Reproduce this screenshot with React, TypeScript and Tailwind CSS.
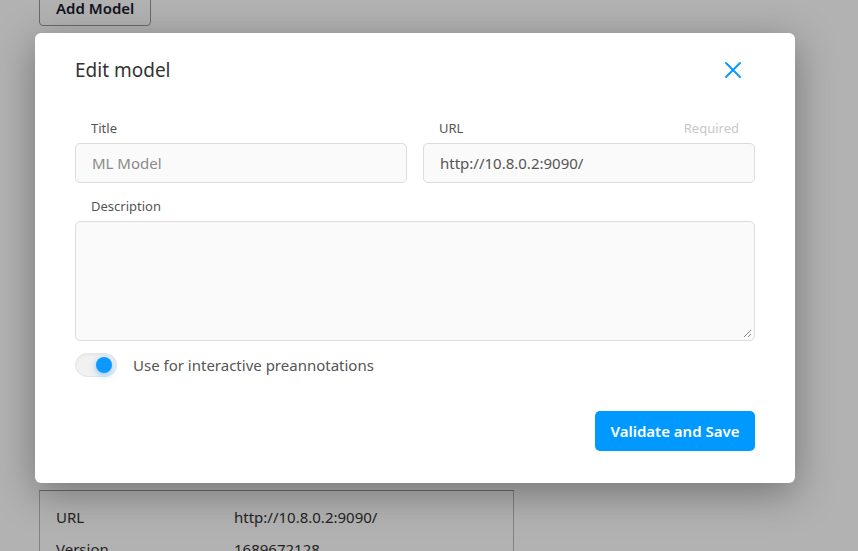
import React from "react";

const font = { fontFamily: '"Noto Sans", "Open Sans", sans-serif' };

const Field = ({
  label,
  value,
  muted,
  required,
}: {
  label: string;
  value: string;
  muted?: boolean;
  required?: boolean;
}) => {
  return (
    <div className="flex-1">
      <div className="flex justify-between h-[18px] px-4 text-[13px] leading-[18px]">
        <span className="text-[#555]">{label}</span>
        {required && <span className="text-[#c8c8c8]">Required</span>}
      </div>
      <div
        className={`mt-[6px] h-10 rounded-[5px] border border-[#dcdcdc] bg-[#fafafa] px-4 flex items-center text-[15px] ${
          muted ? "text-[#8a8a8a]" : "text-[#555]"
        }`}
      >
        {value}
      </div>
    </div>
  );
};

export default function App() {
  return (
    <div className="relative h-[551px] w-[858px] overflow-hidden bg-white" style={font}>
      {/* page behind the dialog */}
      <div className="flex flex-col items-start pl-[39px]">
        <button className="-mt-[10px] h-9 px-4 rounded-[4px] border border-[#999] bg-white text-[15px] font-semibold text-[#1a1a2e]">
          Add Model
        </button>
        <div className="mt-[464px] w-[475px] border border-[#bbb] border-t-[#999] pt-[10px] px-4">
          <div className="flex items-center h-8 text-[15px] text-[#333]">
            <span className="w-[178px]">URL</span>
            <span>http://10.8.0.2:9090/</span>
          </div>
          <div className="flex items-center h-8 text-[15px] text-[#333]">
            <span className="w-[178px]">Version</span>
            <span>1689672128</span>
          </div>
        </div>
      </div>

      {/* overlay + dialog */}
      <div className="absolute inset-0 bg-black/30">
        <div className="ml-[35px] mt-[33px] w-[760px] h-[450px] rounded-[6px] bg-white shadow-[0_10px_40px_rgba(0,0,0,0.35)] px-10 pt-[22px]">
          <div className="flex items-center justify-between h-[30px]">
            <h2 className="text-[19px] text-[#333]">Edit model</h2>
            <svg width="18" height="18" viewBox="0 0 18 18" className="mr-[13px]">
              <path d="M2 2 L16 16 M16 2 L2 16" stroke="#0d99ff" strokeWidth="2" strokeLinecap="round" />
            </svg>
          </div>

          <div className="flex gap-4 mt-[34px]">
            <Field label="Title" value="ML Model" muted />
            <Field label="URL" value="http://10.8.0.2:9090/" required />
          </div>

          <div className="mt-[14px] px-4 h-[18px] text-[13px] leading-[18px] text-[#555]">Description</div>
          <div className="relative mt-[6px] h-[120px] rounded-[5px] border border-[#dcdcdc] bg-[#fafafa]">
            <svg width="10" height="10" viewBox="0 0 10 10" className="absolute right-[2px] bottom-[2px]">
              <path d="M9 2 L2 9 M9 6 L6 9" stroke="#888" strokeWidth="1" />
            </svg>
          </div>

          <div className="flex items-center mt-3 h-6">
            <div className="relative w-[42px] h-6 rounded-full bg-[#f1f1f1] border border-[#e6e6e6] shadow-[inset_0_1px_2px_rgba(0,0,0,0.05)]">
              <div className="absolute right-[4px] top-[3px] w-4 h-4 rounded-full bg-[#0d99ff] shadow-[0_2px_6px_rgba(13,153,255,0.45)]" />
            </div>
            <span className="ml-4 text-[15px] text-[#555]">Use for interactive preannotations</span>
          </div>

          <div className="flex justify-end mt-[34px]">
            <button className="h-10 w-[160px] rounded-[5px] bg-[#0099ff] text-white text-[15px] font-semibold">
              Validate and Save
            </button>
          </div>
        </div>
      </div>
    </div>
  );
}
